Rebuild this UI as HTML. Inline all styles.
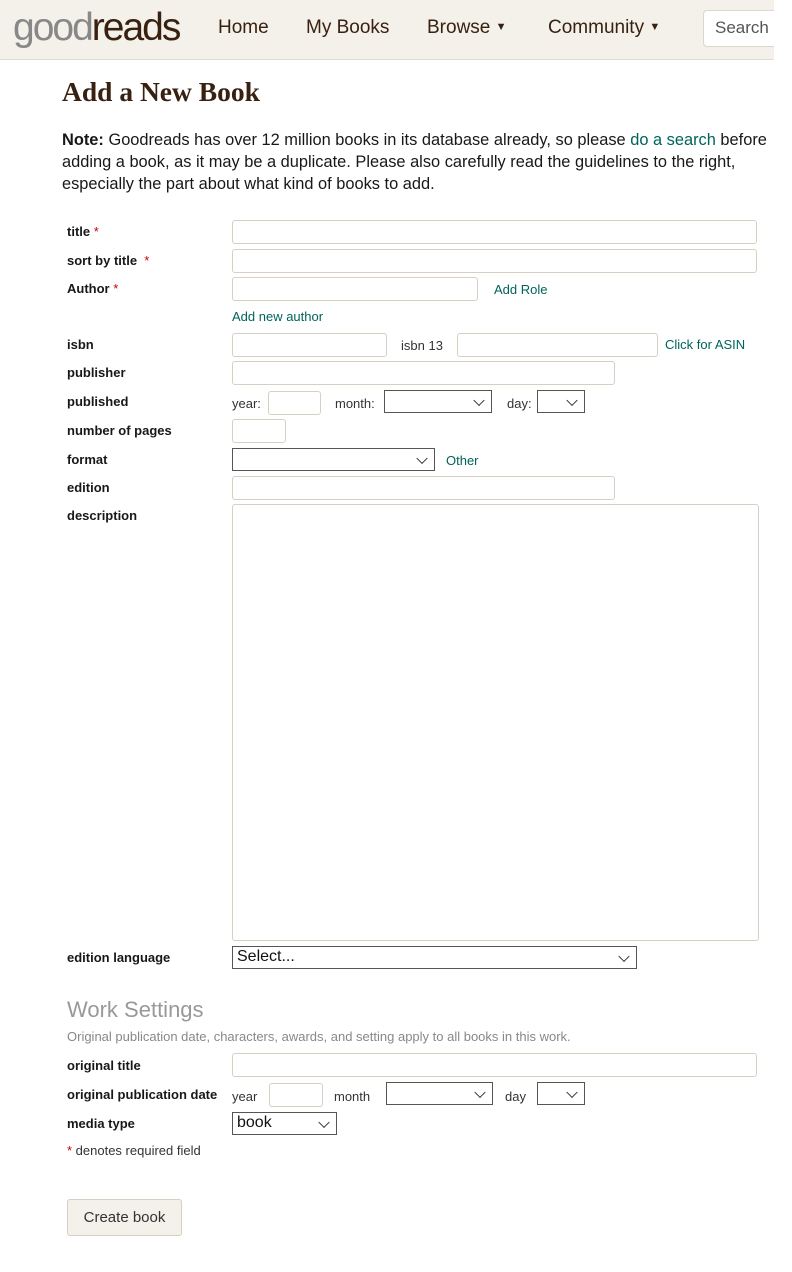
<!DOCTYPE html>
<html><head><meta charset="utf-8"><style>
*{box-sizing:border-box;margin:0;padding:0}
body{width:792px;height:1272px;background:#fff;font-family:"Liberation Sans",sans-serif;color:#181818;position:relative;overflow:hidden}
.hdr{position:absolute;left:0;top:0;width:774px;height:60px;background:#f4f1ea;border-bottom:1px solid #e0ddd5}
.a{position:absolute;white-space:nowrap}
.nav{font-size:19px;color:#382110;top:17px}
.lbl{font-size:13px;font-weight:bold;color:#181818;left:67px;margin-top:1px}
.star{color:#c00;font-weight:normal}
.in{position:absolute;border:1px solid #d6d0c4;border-radius:3px;background:#fff}
.sel{position:absolute;border:1px solid #555;background:#fff}
.sel:after{content:"";position:absolute;right:8px;top:50%;width:7px;height:7px;border-right:1px solid #333;border-bottom:1px solid #333;transform:translateY(-70%) rotate(45deg)}
.t{font-size:13px;color:#333;margin-top:1px}
.lnk{font-size:13px;color:#00635d}
</style></head><body>
<div class="hdr"></div>
<div class="a" style="left:13px;top:4px;font-size:39px;letter-spacing:-2px;line-height:48px"><span style="color:#888;font-weight:normal">good</span><span style="color:#382110">reads</span></div>
<div class="a nav" style="left:218px">Home</div>
<div class="a nav" style="left:306px">My Books</div>
<div class="a nav" style="left:427px">Browse <span style="font-size:11px;vertical-align:3px">▼</span></div>
<div class="a nav" style="left:548px">Community <span style="font-size:11px;vertical-align:3px">▼</span></div>
<div class="a" style="left:703px;top:10px;width:80px;height:37px;background:#fff;border:1px solid #dcd6cc;border-radius:4px;font-size:17px;color:#555;padding:7px 0 0 11px;overflow:hidden">Search books</div>
<div class="a" style="left:774px;top:0;width:18px;height:1272px;background:#fff"></div>

<div class="a" style="left:62px;top:76px;font-family:'Liberation Serif',serif;font-weight:bold;font-size:27.5px;color:#382110">Add a New Book</div>
<div class="a" style="left:62px;top:129px;font-size:16.4px;line-height:22px;color:#181818;white-space:normal;width:712px"><b>Note:</b> Goodreads has over 12 million books in its database already, so please <span style="color:#00635d">do a search</span> before adding a book, as it may be a duplicate. Please also carefully read the guidelines to the right, especially the part about what kind of books to add.</div>

<div class="a lbl" style="top:223px">title <span class="star">*</span></div>
<div class="in" style="left:232px;top:220px;width:525px;height:24px"></div>
<div class="a lbl" style="top:252px">sort by title &nbsp;<span class="star">*</span></div>
<div class="in" style="left:232px;top:249px;width:525px;height:24px"></div>
<div class="a lbl" style="top:280px">Author <span class="star">*</span></div>
<div class="in" style="left:232px;top:277px;width:246px;height:24px"></div>
<div class="a lnk" style="left:494px;top:282px">Add Role</div>
<div class="a lnk" style="left:232px;top:309px">Add new author</div>
<div class="a lbl" style="top:336px">isbn</div>
<div class="in" style="left:232px;top:333px;width:155px;height:24px"></div>
<div class="a t" style="left:401px;top:337px">isbn 13</div>
<div class="in" style="left:457px;top:333px;width:201px;height:24px"></div>
<div class="a lnk" style="left:665px;top:337px">Click for ASIN</div>
<div class="a lbl" style="top:364px">publisher</div>
<div class="in" style="left:232px;top:361px;width:383px;height:24px"></div>
<div class="a lbl" style="top:393px">published</div>
<div class="a t" style="left:232px;top:395px">year:</div>
<div class="in" style="left:268px;top:391px;width:53px;height:24px"></div>
<div class="a t" style="left:335px;top:395px">month:</div>
<div class="sel" style="left:384px;top:390px;width:108px;height:23px"></div>
<div class="a t" style="left:507px;top:395px">day:</div>
<div class="sel" style="left:537px;top:390px;width:48px;height:23px"></div>
<div class="a lbl" style="top:422px">number of pages</div>
<div class="in" style="left:232px;top:419px;width:54px;height:24px"></div>
<div class="a lbl" style="top:451px">format</div>
<div class="sel" style="left:232px;top:448px;width:203px;height:23px"></div>
<div class="a lnk" style="left:446px;top:453px">Other</div>
<div class="a lbl" style="top:479px">edition</div>
<div class="in" style="left:232px;top:476px;width:383px;height:24px"></div>
<div class="a lbl" style="top:507px">description</div>
<div class="in" style="left:232px;top:504px;width:527px;height:437px"></div>
<div class="a lbl" style="top:949px">edition language</div>
<div class="sel" style="left:232px;top:946px;width:405px;height:23px;font-size:16px;padding:1px 0 0 4px;color:#111">Select...</div>

<div class="a" style="left:67px;top:997px;font-size:22px;color:#999">Work Settings</div>
<div class="a" style="left:67px;top:1029px;font-size:13px;color:#888">Original publication date, characters, awards, and setting apply to all books in this work.</div>
<div class="a lbl" style="top:1057px">original title</div>
<div class="in" style="left:232px;top:1053px;width:525px;height:24px"></div>
<div class="a lbl" style="top:1086px">original publication date</div>
<div class="a t" style="left:232px;top:1088px">year</div>
<div class="in" style="left:269px;top:1083px;width:54px;height:24px"></div>
<div class="a t" style="left:334px;top:1088px">month</div>
<div class="sel" style="left:386px;top:1082px;width:107px;height:23px"></div>
<div class="a t" style="left:505px;top:1088px">day</div>
<div class="sel" style="left:537px;top:1082px;width:48px;height:23px"></div>
<div class="a lbl" style="top:1115px">media type</div>
<div class="sel" style="left:232px;top:1112px;width:105px;height:23px;font-size:16px;padding:1px 0 0 4px;color:#111">book</div>
<div class="a t" style="left:67px;top:1142px"><span style="color:#c00">*</span> denotes required field</div>
<div class="a" style="left:67px;top:1199px;width:115px;height:37px;background:#f4f1ea;border:1px solid #d6d0c4;border-radius:3px;font-size:15px;color:#333;text-align:center;line-height:35px">Create book</div>
</body></html>
